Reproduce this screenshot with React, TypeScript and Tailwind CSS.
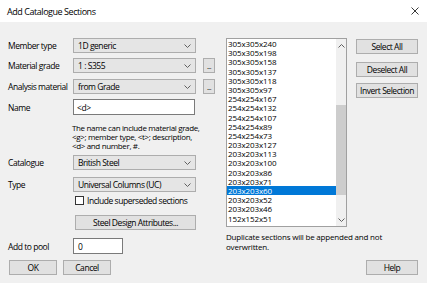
const sections = [
  '305x305x240',
  '305x305x198',
  '305x305x158',
  '305x305x137',
  '305x305x118',
  '305x305x97',
  '254x254x167',
  '254x254x132',
  '254x254x107',
  '254x254x89',
  '254x254x73',
  '203x203x127',
  '203x203x113',
  '203x203x100',
  '203x203x86',
  '203x203x71',
  '203x203x60',
  '203x203x52',
  '203x203x46',
  '152x152x51',
  '152x152x44',
  '152x152x37',
];

const selected = '203x203x60';

function Chevron({ up = false }: { up?: boolean }) {
  return (
    <svg width="7" height="4" viewBox="0 0 7 4" className="shrink-0">
      <path
        d={up ? 'M0.5 3.5 L3.5 0.5 L6.5 3.5' : 'M0.5 0.5 L3.5 3.5 L6.5 0.5'}
        fill="none"
        stroke="#606060"
        strokeWidth="1"
      />
    </svg>
  );
}

function Combo({ value }: { value: string }) {
  return (
    <div className="flex h-[15px] w-[123px] items-center justify-between border border-[#adadad] bg-[#e5e5e5] pl-[4px] pr-[4px]">
      <span>{value}</span>
      <Chevron />
    </div>
  );
}

function Ellipsis() {
  return (
    <div className="ml-[7px] flex h-[15px] w-[12px] items-end justify-center border border-[#adadad] bg-[#e1e1e1] pb-[2px] text-[7px] leading-none">
      ...
    </div>
  );
}

function Row({ label, children }: { label: string; children: React.ReactNode }) {
  return (
    <div className="flex items-center">
      <div className="w-[65px] shrink-0 whitespace-nowrap">{label}</div>
      {children}
    </div>
  );
}

function Button({ label, className = '' }: { label: string; className?: string }) {
  return (
    <div
      className={`flex h-[15px] items-center justify-center border border-[#adadad] bg-[#e1e1e1] ${className}`}
    >
      {label}
    </div>
  );
}

export default function App() {
  return (
    <div
      className="flex h-[283px] w-[427px] flex-col overflow-hidden text-[8.5px] leading-[11px] tracking-[-0.45px] text-black"
      style={{ fontFamily: '"Open Sans", "Noto Sans", sans-serif' }}
    >
      {/* title bar */}
      <div className="flex h-[22px] shrink-0 items-center justify-between bg-white pl-[7px] pr-[8px]">
        <span className="text-[9px]">Add Catalogue Sections</span>
        <svg width="8" height="8" viewBox="0 0 8 8">
          <path d="M0.5 0.5 L7.5 7.5 M7.5 0.5 L0.5 7.5" stroke="#222" strokeWidth="0.9" />
        </svg>
      </div>

      <div className="flex flex-1 flex-col bg-[#f0f0f0] pl-[8px] pt-[16px]">
        <div className="flex">
          {/* left column */}
          <div className="flex w-[208px] shrink-0 flex-col">
            <Row label="Member type">
              <Combo value="1D generic" />
            </Row>
            <div className="mt-[5px]">
              <Row label="Material grade">
                <Combo value="1 : S355" />
                <Ellipsis />
              </Row>
            </div>
            <div className="mt-[6px]">
              <Row label="Analysis material">
                <Combo value="from Grade" />
                <Ellipsis />
              </Row>
            </div>
            <div className="mt-[5px]">
              <Row label="Name">
                <div className="flex h-[16px] w-[122px] items-center border border-[#7a7a7a] bg-white pl-[3px]">
                  &lt;d&gt;
                </div>
              </Row>
            </div>
            <div className="ml-[64px] mt-[8px] text-[8px] leading-[9px] tracking-[-0.35px]">
              <div>The name can include material grade,</div>
              <div>&lt;g&gt;; member type, &lt;t&gt;; description,</div>
              <div>&lt;d&gt; and number, #.</div>
            </div>
            <div className="mt-[5px]">
              <Row label="Catalogue">
                <Combo value="British Steel" />
              </Row>
            </div>
            <div className="mt-[7px]">
              <Row label="Type">
                <Combo value="Universal Columns (UC)" />
              </Row>
            </div>
            <div className="ml-[67px] mt-[3px] flex h-[11px] items-center gap-[3px]">
              <div className="h-[9px] w-[9px] border border-[#333] bg-white" />
              <span>Include superseded sections</span>
            </div>
            <Button label="Steel Design Attributes..." className="ml-[67px] mt-[9px] w-[121px]" />
            <div className="mt-[8px]">
              <Row label="Add to pool">
                <div className="flex h-[16px] w-[50px] items-center border border-[#7a7a7a] bg-white pl-[4px]">
                  0
                </div>
              </Row>
            </div>
          </div>

          {/* section list */}
          <div className="ml-[10px] flex w-[121px] shrink-0 flex-col">
            <div className="flex h-[189px] border border-[#a0a0a0] bg-white">
              <div className="flex-1 overflow-hidden text-[8px] tracking-[-0.1px]">
                {sections.map((s) => (
                  <div
                    key={s}
                    className={`h-[9.2px] pl-[1px] leading-[9.2px] ${
                      s === selected ? 'bg-[#0078d7] text-white' : ''
                    }`}
                  >
                    {s}
                  </div>
                ))}
              </div>
              <div className="flex w-[10px] flex-col bg-[#f0f0f0]">
                <div className="flex h-[13px] items-center justify-center">
                  <Chevron up />
                </div>
                <div className="mt-[53px] h-[90px] bg-[#cdcdcd]" />
                <div className="flex-1" />
                <div className="flex h-[12px] items-center justify-center">
                  <Chevron />
                </div>
              </div>
            </div>
            <div className="-mr-[60px] mt-[5px] text-[8px] leading-[10px] tracking-[-0.2px]">
              Duplicate sections will be appended and not overwritten.
            </div>
          </div>

          {/* right buttons */}
          <div className="ml-[9px] flex w-[62px] shrink-0 flex-col">
            <Button label="Select All" className="mt-[1px]" />
            <Button label="Deselect All" className="mt-[8px]" />
            <Button label="Invert Selection" className="mt-[6px]" />
          </div>
        </div>

        {/* bottom buttons */}
        <div className="mt-[6px] flex items-center pr-[9px]">
          <Button label="OK" className="ml-[1px] w-[48px] border-[#0078d7]" />
          <Button label="Cancel" className="ml-[6px] w-[48px]" />
          <div className="flex-1" />
          <Button label="Help" className="w-[52px]" />
        </div>
      </div>
    </div>
  );
}
